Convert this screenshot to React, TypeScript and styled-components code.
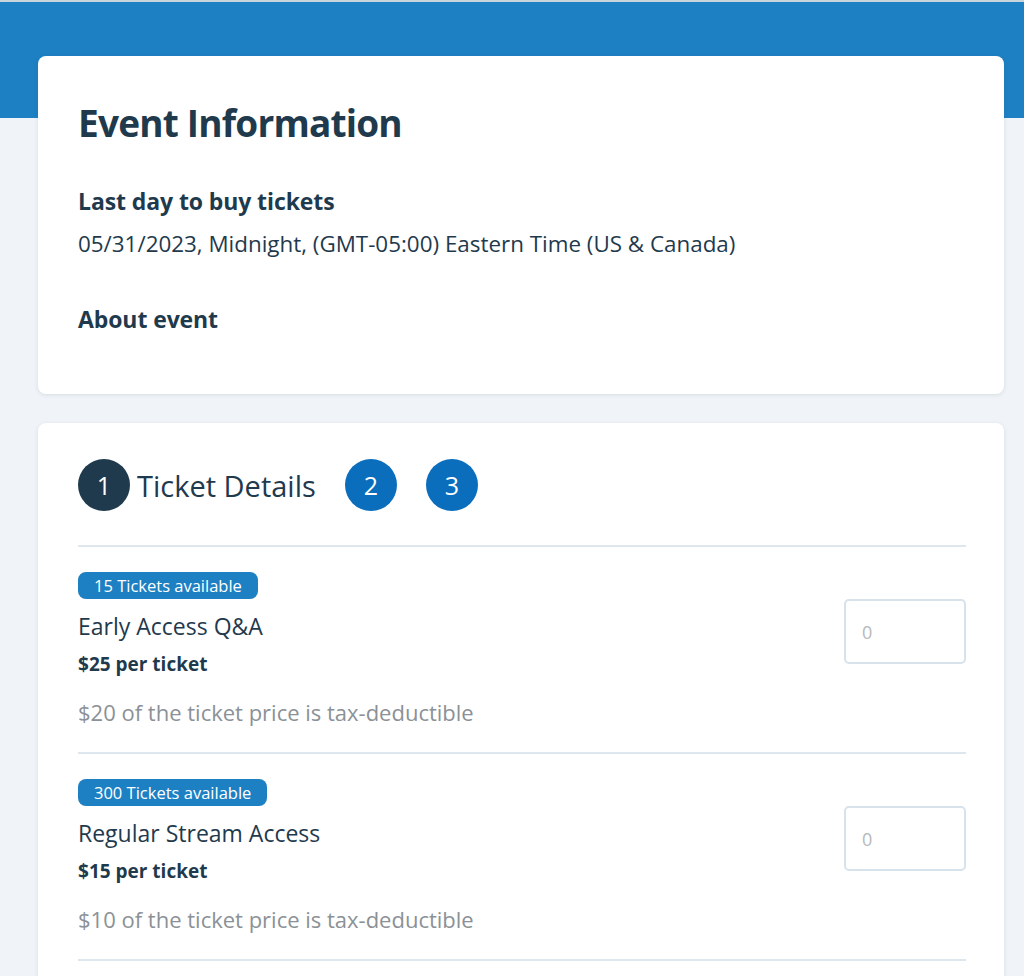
import styled, { createGlobalStyle } from "styled-components"

const GlobalStyle = createGlobalStyle`
    html, body {
        margin: 0;
        padding: 0;
        background: #f0f4f8;
        font-family: "Open Sans", "Noto Sans", sans-serif;
        color: #1f3a4d;
    }
    * {
        box-sizing: border-box;
    }
`

const Page = styled.div`
    position: relative;
    min-height: 976px;
    overflow: hidden;
    border-top: 2px solid #c9d3dc;
`

const Banner = styled.div`
    height: 116px;
    background: #1d80c3;
    margin-bottom: -62px;
`

const Column = styled.div`
    padding: 0 20px 0 38px;
    display: flex;
    flex-direction: column;
    gap: 29px;
`

const Card = styled.section<{ $pad: string }>`
    background: #ffffff;
    border-radius: 8px;
    box-shadow: 0 1px 4px rgba(31, 58, 77, 0.12);
    padding: ${(p) => p.$pad};
`

const Title = styled.h1`
    margin: 0 0 40px;
    font-size: 37px;
    line-height: 46px;
    font-weight: 700;
    letter-spacing: -0.8px;
`

const Label = styled.h3`
    margin: 0;
    font-size: 23px;
    line-height: 30px;
    font-weight: 700;
    letter-spacing: -0.1px;
`

const Text = styled.p`
    margin: 14px 0 46px;
    font-size: 22.4px;
    line-height: 28px;
`

const Steps = styled.div`
    display: flex;
    align-items: center;
    padding-bottom: 34px;
    border-bottom: 2px solid #dfe7ee;
`

const Step = styled.div<{ $active?: boolean }>`
    width: 52px;
    height: 52px;
    border-radius: 50%;
    background: ${(p) => (p.$active ? "#1f3a4d" : "#0a6ebd")};
    color: #ffffff;
    font-size: 25px;
    display: flex;
    align-items: center;
    justify-content: center;
    margin-right: ${(p) => (p.$active ? "7px" : "29px")};
`

const StepLabel = styled.span`
    font-size: 29px;
    font-weight: 400;
    margin-right: 29px;
`

const TicketRow = styled.div`
    display: flex;
    justify-content: space-between;
    align-items: flex-start;
    padding: 25px 0 26px;
    border-bottom: 2px solid #dfe7ee;
`

const TicketInfo = styled.div`
    display: flex;
    flex-direction: column;
    align-items: flex-start;
`

const Badge = styled.span`
    background: #1d80c3;
    color: #ffffff;
    font-size: 16.5px;
    line-height: 27px;
    padding: 0 16px;
    border-radius: 8px;
`

const TicketName = styled.div`
    margin-top: 11px;
    font-size: 23px;
    line-height: 32px;
`

const Price = styled.div`
    margin-top: 9px;
    font-size: 19px;
    line-height: 26px;
    font-weight: 700;
`

const Deduct = styled.div`
    margin-top: 21px;
    font-size: 22px;
    line-height: 28px;
    color: #8b9196;
`

const QtyInput = styled.input`
    width: 122px;
    height: 65px;
    margin-top: 27px;
    border: 2px solid #d8e2ea;
    border-radius: 5px;
    padding: 0 16px;
    font-family: "Open Sans", "Noto Sans", sans-serif;
    font-size: 18px;
    color: #1f3a4d;
    outline: none;

    &::placeholder {
        color: #b4b9bd;
    }
`

const tickets = [
    { available: 15, name: "Early Access Q&A", price: 25, deductible: 20 },
    { available: 300, name: "Regular Stream Access", price: 15, deductible: 10 },
]

const App = () => {
    return (
        <>
            <GlobalStyle />
            <Page>
                <Banner />
                <Column>
                    <Card $pad="44px 40px 14px">
                        <Title>Event Information</Title>
                        <Label>Last day to buy tickets</Label>
                        <Text>05/31/2023, Midnight, (GMT-05:00) Eastern Time (US &amp; Canada)</Text>
                        <Label>About event</Label>
                        <Text />
                    </Card>
                    <Card $pad="36px 38px 40px 40px">
                        <Steps>
                            <Step $active>1</Step>
                            <StepLabel>Ticket Details</StepLabel>
                            <Step>2</Step>
                            <Step>3</Step>
                        </Steps>
                        {tickets.map((t) => (
                            <TicketRow key={t.name}>
                                <TicketInfo>
                                    <Badge>{t.available} Tickets available</Badge>
                                    <TicketName>{t.name}</TicketName>
                                    <Price>${t.price} per ticket</Price>
                                    <Deduct>${t.deductible} of the ticket price is tax-deductible</Deduct>
                                </TicketInfo>
                                <QtyInput placeholder="0" />
                            </TicketRow>
                        ))}
                    </Card>
                </Column>
            </Page>
        </>
    )
}

export default App
